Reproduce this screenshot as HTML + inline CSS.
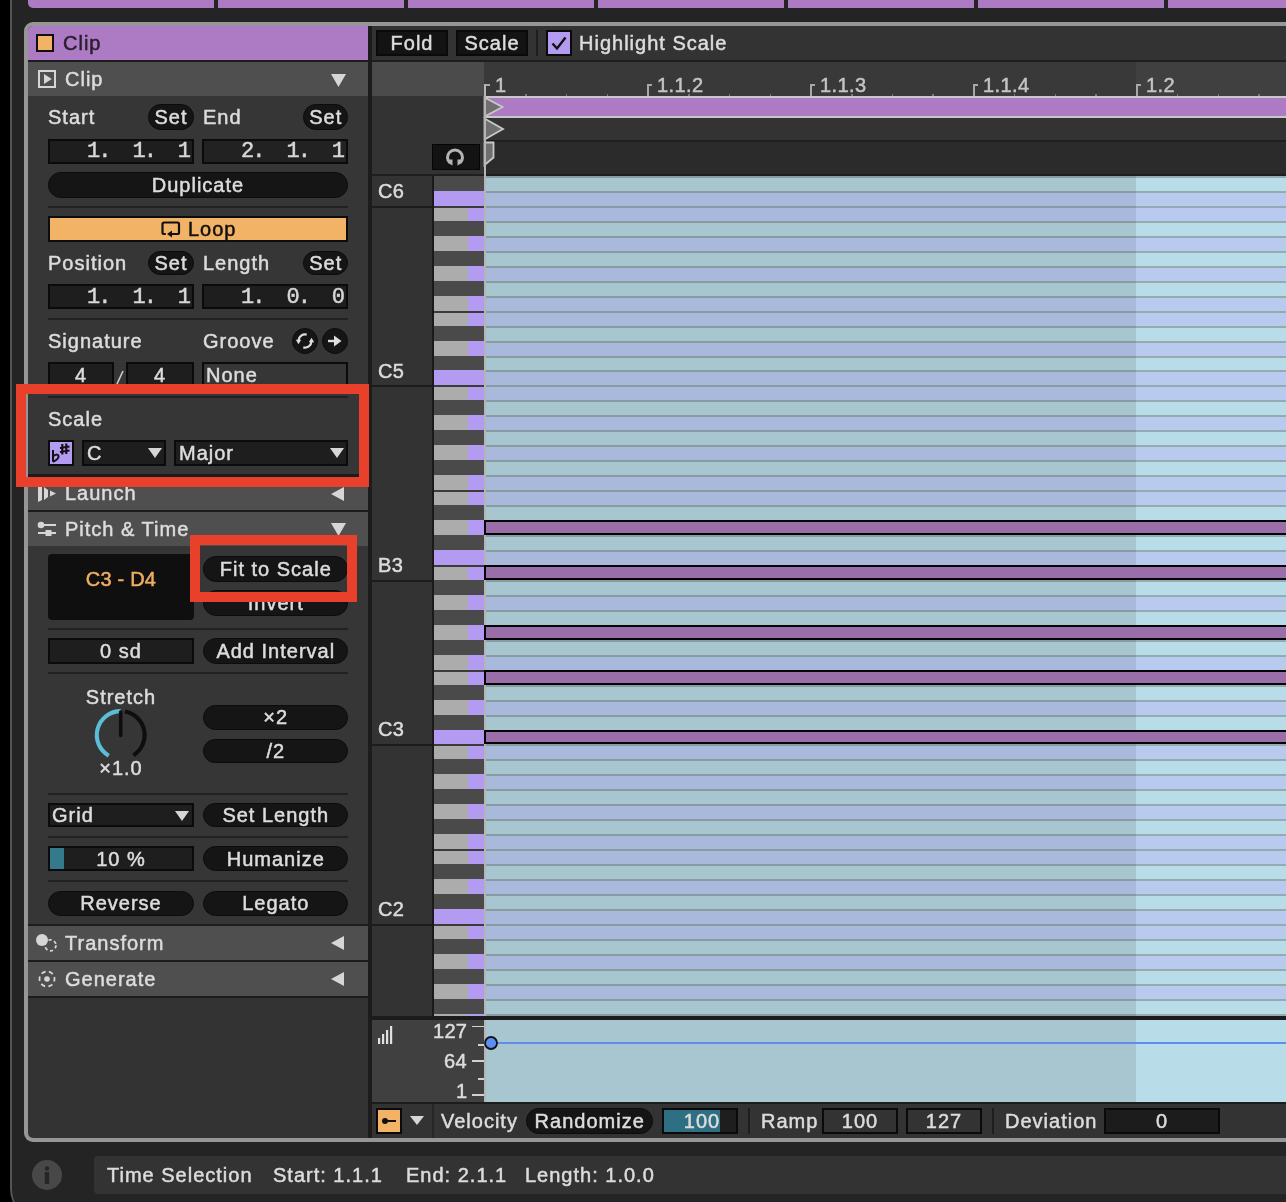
<!DOCTYPE html>
<html><head><meta charset="utf-8"><style>
html,body{margin:0;padding:0;}
body{width:1286px;height:1202px;position:relative;overflow:hidden;background:#000;font-family:'Liberation Sans', sans-serif;}
body>div{position:absolute;}
body>div[style*="font-family"]{will-change:transform;}
</style></head><body>
<div style="left:0px;top:0px;width:1286px;height:1202px;background:#000"></div>
<div style="left:10px;top:-40px;width:1310px;height:1259px;background:#242424;border-left:2px solid #555;border-bottom-left-radius:30px;box-sizing:border-box"></div>
<div style="left:28px;top:-5px;width:186px;height:13px;background:#ad7bc3;border-bottom-left-radius:5px;"></div>
<div style="left:218px;top:-5px;width:186px;height:13px;background:#ad7bc3;"></div>
<div style="left:408px;top:-5px;width:186px;height:13px;background:#ad7bc3;"></div>
<div style="left:598px;top:-5px;width:186px;height:13px;background:#ad7bc3;"></div>
<div style="left:788px;top:-5px;width:186px;height:13px;background:#ad7bc3;"></div>
<div style="left:978px;top:-5px;width:186px;height:13px;background:#ad7bc3;"></div>
<div style="left:1168px;top:-5px;width:132px;height:13px;background:#ad7bc3;"></div>
<div style="left:24px;top:22px;width:1276px;height:1120px;background:#969696;border-radius:9px 0 0 9px"></div>
<div style="left:28px;top:26px;width:1272px;height:1112px;background:#333;border-radius:5px 0 0 5px"></div>
<div style="left:28px;top:26px;width:340px;height:34px;background:#ad7bc3;border-top-left-radius:5px"></div>
<div style="left:36px;top:34px;width:18px;height:18px;background:#f3b366;border:2px solid #111;box-sizing:border-box"></div>
<div style="left:62.5px;top:31.9px;font-family:'Liberation Sans', sans-serif;font-size:20px;line-height:22.34px;color:#2a1d2e;letter-spacing:1.0px;white-space:nowrap;-webkit-text-stroke:0.5px #2a1d2e;">Clip</div>
<div style="left:28px;top:60px;width:340px;height:2px;background:#1c1c1c"></div>
<div style="left:28px;top:62px;width:340px;height:34px;background:#4f4f4f"></div>
<svg style="position:absolute;left:38px;top:70px;overflow:visible" width="18" height="18" viewBox="0 0 18 18"><rect x="1" y="1" width="16" height="16" fill="none" stroke="#d6d6d6" stroke-width="2"/><path d="M6 4 L13.8 9 L6 14 Z" fill="#d6d6d6"/></svg>
<div style="left:64.5px;top:68.4px;font-family:'Liberation Sans', sans-serif;font-size:20px;line-height:22.34px;color:#dcdcdc;letter-spacing:1.0px;white-space:nowrap;-webkit-text-stroke:0.5px #dcdcdc;">Clip</div>
<svg style="position:absolute;left:331px;top:74px;overflow:visible" width="15" height="13" viewBox="0 0 15 13"><path d="M0 0 L15 0 L7.5 13 Z" fill="#d6d6d6"/></svg>
<div style="left:28px;top:96px;width:340px;height:380px;background:#363636"></div>
<div style="left:47.5px;top:105.9px;font-family:'Liberation Sans', sans-serif;font-size:20px;line-height:22.34px;color:#dcdcdc;letter-spacing:1.0px;white-space:nowrap;-webkit-text-stroke:0.5px #dcdcdc;">Start</div>
<div style="left:148px;top:104px;width:46px;height:25.5px;background:#151515;border:1.5px solid #0c0c0c;border-radius:12.75px;box-sizing:border-box"></div>
<div style="left:148px;width:46px;text-align:center;top:105.53px;font-family:'Liberation Sans', sans-serif;font-size:20px;line-height:22.34px;color:#dcdcdc;letter-spacing:1.0px;white-space:nowrap;-webkit-text-stroke:0.5px #dcdcdc;">Set</div>
<div style="left:202.5px;top:105.9px;font-family:'Liberation Sans', sans-serif;font-size:20px;line-height:22.34px;color:#dcdcdc;letter-spacing:1.0px;white-space:nowrap;-webkit-text-stroke:0.5px #dcdcdc;">End</div>
<div style="left:302.5px;top:104px;width:45.5px;height:25.5px;background:#151515;border:1.5px solid #0c0c0c;border-radius:12.75px;box-sizing:border-box"></div>
<div style="left:302.5px;width:45.5px;text-align:center;top:105.53px;font-family:'Liberation Sans', sans-serif;font-size:20px;line-height:22.34px;color:#dcdcdc;letter-spacing:1.0px;white-space:nowrap;-webkit-text-stroke:0.5px #dcdcdc;">Set</div>
<div style="left:48px;top:138.5px;width:146px;height:25.0px;background:#1e1e1e;border:2px solid #0b0b0b;box-sizing:border-box"></div>
<div style="left:202px;top:138.5px;width:146px;height:25.0px;background:#222;border:2px solid #0b0b0b;box-sizing:border-box"></div>
<div style="right:1096.5px;top:139.69px;font-family:'Liberation Mono', monospace;font-size:22px;line-height:24.922px;color:#d8d8d8;letter-spacing:-1.85px;white-space:nowrap;-webkit-text-stroke:0.5px #d8d8d8;">1.&nbsp;&nbsp;1.&nbsp;&nbsp;1</div>
<div style="right:942.5px;top:139.69px;font-family:'Liberation Mono', monospace;font-size:22px;line-height:24.922px;color:#d8d8d8;letter-spacing:-1.85px;white-space:nowrap;-webkit-text-stroke:0.5px #d8d8d8;">2.&nbsp;&nbsp;1.&nbsp;&nbsp;1</div>
<div style="left:48px;top:172px;width:300px;height:25.5px;background:#151515;border:1.5px solid #0c0c0c;border-radius:12.75px;box-sizing:border-box"></div>
<div style="left:48px;width:300px;text-align:center;top:173.53px;font-family:'Liberation Sans', sans-serif;font-size:20px;line-height:22.34px;color:#dcdcdc;letter-spacing:1.0px;white-space:nowrap;-webkit-text-stroke:0.5px #dcdcdc;">Duplicate</div>
<div style="left:48px;top:206px;width:300px;height:2px;background:#222"></div>
<div style="left:48px;top:216px;width:300px;height:25.5px;background:#f3b366;border:2px solid #0c0c0c;box-sizing:border-box"></div>
<svg style="position:absolute;left:161px;top:221px;overflow:visible" width="20" height="17" viewBox="0 0 20 17"><path d="M4 13 L2.5 13 Q1.5 13 1.5 12 L1.5 3 Q1.5 1.5 3 1.5 L16.5 1.5 Q18 1.5 18 3 L18 11.5 Q18 13 16.5 13 L9 13" fill="none" stroke="#111" stroke-width="2.2" stroke-linecap="round"/><path d="M6 13 L11 9.5 L11 16.5 Z" fill="#111"/></svg>
<div style="left:188.0px;top:217.9px;font-family:'Liberation Sans', sans-serif;font-size:20px;line-height:22.34px;color:#111;letter-spacing:1.0px;white-space:nowrap;-webkit-text-stroke:0.5px #111;">Loop</div>
<div style="left:47.5px;top:251.9px;font-family:'Liberation Sans', sans-serif;font-size:20px;line-height:22.34px;color:#dcdcdc;letter-spacing:1.0px;white-space:nowrap;-webkit-text-stroke:0.5px #dcdcdc;">Position</div>
<div style="left:148px;top:250.8px;width:46px;height:24.5px;background:#151515;border:1.5px solid #0c0c0c;border-radius:12.25px;box-sizing:border-box"></div>
<div style="left:148px;width:46px;text-align:center;top:251.83px;font-family:'Liberation Sans', sans-serif;font-size:20px;line-height:22.34px;color:#dcdcdc;letter-spacing:1.0px;white-space:nowrap;-webkit-text-stroke:0.5px #dcdcdc;">Set</div>
<div style="left:202.5px;top:251.9px;font-family:'Liberation Sans', sans-serif;font-size:20px;line-height:22.34px;color:#dcdcdc;letter-spacing:1.0px;white-space:nowrap;-webkit-text-stroke:0.5px #dcdcdc;">Length</div>
<div style="left:302.5px;top:250.8px;width:45.5px;height:24.5px;background:#151515;border:1.5px solid #0c0c0c;border-radius:12.25px;box-sizing:border-box"></div>
<div style="left:302.5px;width:45.5px;text-align:center;top:251.83px;font-family:'Liberation Sans', sans-serif;font-size:20px;line-height:22.34px;color:#dcdcdc;letter-spacing:1.0px;white-space:nowrap;-webkit-text-stroke:0.5px #dcdcdc;">Set</div>
<div style="left:48px;top:284px;width:146px;height:25.3px;background:#1e1e1e;border:2px solid #0b0b0b;box-sizing:border-box"></div>
<div style="left:202px;top:284px;width:146px;height:25.3px;background:#1e1e1e;border:2px solid #0b0b0b;box-sizing:border-box"></div>
<div style="right:1096.5px;top:285.69px;font-family:'Liberation Mono', monospace;font-size:22px;line-height:24.922px;color:#d8d8d8;letter-spacing:-1.85px;white-space:nowrap;-webkit-text-stroke:0.5px #d8d8d8;">1.&nbsp;&nbsp;1.&nbsp;&nbsp;1</div>
<div style="right:942.5px;top:285.69px;font-family:'Liberation Mono', monospace;font-size:22px;line-height:24.922px;color:#d8d8d8;letter-spacing:-1.85px;white-space:nowrap;-webkit-text-stroke:0.5px #d8d8d8;">1.&nbsp;&nbsp;0.&nbsp;&nbsp;0</div>
<div style="left:48px;top:318px;width:300px;height:2px;background:#222"></div>
<div style="left:47.5px;top:329.9px;font-family:'Liberation Sans', sans-serif;font-size:20px;line-height:22.34px;color:#dcdcdc;letter-spacing:1.0px;white-space:nowrap;-webkit-text-stroke:0.5px #dcdcdc;">Signature</div>
<div style="left:202.5px;top:329.9px;font-family:'Liberation Sans', sans-serif;font-size:20px;line-height:22.34px;color:#dcdcdc;letter-spacing:1.0px;white-space:nowrap;-webkit-text-stroke:0.5px #dcdcdc;">Groove</div>
<div style="left:292px;top:328px;width:26px;height:26px;background:#151515;border:1.5px solid #0c0c0c;border-radius:13px;box-sizing:border-box"></div>
<div style="left:322px;top:328px;width:26px;height:26px;background:#151515;border:1.5px solid #0c0c0c;border-radius:13px;box-sizing:border-box"></div>
<svg style="position:absolute;left:292px;top:328px;overflow:visible" width="26" height="26" viewBox="0 0 26 26"><path d="M14.7 6.7 A6.5 6.5 0 0 0 6.5 12.5" fill="none" stroke="#ddd" stroke-width="2.3"/><path d="M3.8 11.8 L9.2 11.8 L6.5 16.3 Z" fill="#ddd"/><path d="M11.3 19.3 A6.5 6.5 0 0 0 19.5 13.5" fill="none" stroke="#ddd" stroke-width="2.3"/><path d="M16.8 14.2 L22.2 14.2 L19.5 9.7 Z" fill="#ddd"/></svg>
<svg style="position:absolute;left:322px;top:328px;overflow:visible" width="26" height="26" viewBox="0 0 26 26"><path d="M6 13 L13 13" stroke="#ddd" stroke-width="2.4"/><path d="M12 7.5 L19.5 13 L12 18.5 Z" fill="#ddd"/></svg>
<div style="left:48px;top:362.3px;width:66px;height:25.2px;background:#1e1e1e;border:2px solid #0b0b0b;box-sizing:border-box"></div>
<div style="left:126px;top:362.3px;width:68px;height:25.2px;background:#1e1e1e;border:2px solid #0b0b0b;box-sizing:border-box"></div>
<div style="left:48px;width:66px;text-align:center;top:363.9px;font-family:'Liberation Sans', sans-serif;font-size:20px;line-height:22.34px;color:#dcdcdc;letter-spacing:1.0px;white-space:nowrap;-webkit-text-stroke:0.5px #dcdcdc;">4</div>
<div style="left:126px;width:68px;text-align:center;top:363.9px;font-family:'Liberation Sans', sans-serif;font-size:20px;line-height:22.34px;color:#dcdcdc;letter-spacing:1.0px;white-space:nowrap;-webkit-text-stroke:0.5px #dcdcdc;">4</div>
<svg style="position:absolute;left:114px;top:362px;overflow:visible" width="12" height="24" viewBox="0 0 12 24"><path d="M3 22 L9 9" stroke="#cfcfcf" stroke-width="1.6"/></svg>
<div style="left:202px;top:362.3px;width:146px;height:25.2px;background:#363636;border:2px solid #0b0b0b;box-sizing:border-box"></div>
<div style="left:205.5px;top:363.9px;font-family:'Liberation Sans', sans-serif;font-size:20px;line-height:22.34px;color:#dcdcdc;letter-spacing:1.0px;white-space:nowrap;-webkit-text-stroke:0.5px #dcdcdc;">None</div>
<div style="left:48px;top:396px;width:300px;height:2px;background:#222"></div>
<div style="left:47.5px;top:408.4px;font-family:'Liberation Sans', sans-serif;font-size:20px;line-height:22.34px;color:#dcdcdc;letter-spacing:1.0px;white-space:nowrap;-webkit-text-stroke:0.5px #dcdcdc;">Scale</div>
<div style="left:48px;top:440px;width:26px;height:26px;background:#b39bf2;border:2px solid #0c0c0c;box-sizing:border-box"></div>
<svg style="position:absolute;left:48px;top:440px;overflow:visible" width="26" height="26" viewBox="0 0 26 26"><path d="M5 10 L5 21.8" stroke="#111" stroke-width="2"/><path d="M5 16.2 Q10.5 13 10.6 16.3 Q10.5 19.5 5 21.8" fill="none" stroke="#111" stroke-width="2"/><path d="M14.3 4 L14.3 14.5 M18.3 3.5 L18.3 14 M12 8 L21.5 6.5 M12 12 L21.5 10.5" stroke="#111" stroke-width="2.1"/></svg>
<div style="left:82px;top:440px;width:84px;height:26px;background:#1e1e1e;border:2px solid #0b0b0b;box-sizing:border-box"></div>
<div style="left:86.5px;top:441.9px;font-family:'Liberation Sans', sans-serif;font-size:20px;line-height:22.34px;color:#dcdcdc;letter-spacing:1.0px;white-space:nowrap;-webkit-text-stroke:0.5px #dcdcdc;">C</div>
<svg style="position:absolute;left:148px;top:448px;overflow:visible" width="14" height="10" viewBox="0 0 14 10"><path d="M0 0 L14 0 L7 10 Z" fill="#d6d6d6"/></svg>
<div style="left:174.4px;top:440px;width:173.6px;height:26px;background:#1e1e1e;border:2px solid #0b0b0b;box-sizing:border-box"></div>
<div style="left:178.5px;top:441.9px;font-family:'Liberation Sans', sans-serif;font-size:20px;line-height:22.34px;color:#dcdcdc;letter-spacing:1.0px;white-space:nowrap;-webkit-text-stroke:0.5px #dcdcdc;">Major</div>
<svg style="position:absolute;left:330px;top:448px;overflow:visible" width="14" height="10" viewBox="0 0 14 10"><path d="M0 0 L14 0 L7 10 Z" fill="#d6d6d6"/></svg>
<div style="left:28px;top:474px;width:340px;height:3px;background:#1c1c1c"></div>
<div style="left:28px;top:477px;width:340px;height:33px;background:#4f4f4f"></div>
<svg style="position:absolute;left:37px;top:486px;overflow:visible" width="20" height="17" viewBox="0 0 20 17"><path d="M1 1 L5 1 L5 14 L1 16 Z" fill="#d6d6d6"/><path d="M7 1 L11 4 L11 11 L7 14 Z" fill="#d6d6d6"/><path d="M13 4.5 L19 7.5 L13 10.5 Z" fill="#d6d6d6"/></svg>
<div style="left:64.5px;top:481.9px;font-family:'Liberation Sans', sans-serif;font-size:20px;line-height:22.34px;color:#dcdcdc;letter-spacing:1.0px;white-space:nowrap;-webkit-text-stroke:0.5px #dcdcdc;">Launch</div>
<svg style="position:absolute;left:331px;top:487px;overflow:visible" width="13" height="14" viewBox="0 0 13 14"><path d="M13 0 L13 14 L0 7 Z" fill="#d6d6d6"/></svg>
<div style="left:28px;top:510px;width:340px;height:2px;background:#1c1c1c"></div>
<div style="left:28px;top:512px;width:340px;height:34px;background:#4f4f4f"></div>
<svg style="position:absolute;left:37px;top:519px;overflow:visible" width="20" height="20" viewBox="0 0 20 20"><circle cx="4" cy="6" r="3.3" fill="#d6d6d6"/><path d="M4 6 L19 6" stroke="#d6d6d6" stroke-width="2"/><path d="M1 14 L19 14" stroke="#d6d6d6" stroke-width="2"/><rect x="8.5" y="11" width="6" height="6" fill="#d6d6d6"/></svg>
<div style="left:64.5px;top:517.9px;font-family:'Liberation Sans', sans-serif;font-size:20px;line-height:22.34px;color:#dcdcdc;letter-spacing:1.0px;white-space:nowrap;-webkit-text-stroke:0.5px #dcdcdc;">Pitch &amp; Time</div>
<svg style="position:absolute;left:331px;top:523px;overflow:visible" width="15" height="13" viewBox="0 0 15 13"><path d="M0 0 L15 0 L7.5 13 Z" fill="#d6d6d6"/></svg>
<div style="left:28px;top:546px;width:340px;height:378px;background:#363636"></div>
<div style="left:48px;top:554px;width:146px;height:66px;background:#0f0f0f;border-radius:4px"></div>
<div style="left:48px;width:146px;text-align:center;top:568.4px;font-family:'Liberation Sans', sans-serif;font-size:20px;line-height:22.34px;color:#f0ad5f;letter-spacing:0.2px;white-space:nowrap;-webkit-text-stroke:0.5px #f0ad5f;">C3 - D4</div>
<div style="left:202.5px;top:556px;width:145.5px;height:25.5px;background:#151515;border:1.5px solid #0c0c0c;border-radius:12.75px;box-sizing:border-box"></div>
<div style="left:202.5px;width:145.5px;text-align:center;top:557.53px;font-family:'Liberation Sans', sans-serif;font-size:20px;line-height:22.34px;color:#dcdcdc;letter-spacing:1.0px;white-space:nowrap;-webkit-text-stroke:0.5px #dcdcdc;">Fit to Scale</div>
<div style="left:202.5px;top:590px;width:145.5px;height:26px;background:#151515;border:1.5px solid #0c0c0c;border-radius:13.0px;box-sizing:border-box"></div>
<div style="left:202.5px;width:145.5px;text-align:center;top:591.78px;font-family:'Liberation Sans', sans-serif;font-size:20px;line-height:22.34px;color:#dcdcdc;letter-spacing:1.0px;white-space:nowrap;-webkit-text-stroke:0.5px #dcdcdc;">Invert</div>
<div style="left:48px;top:628px;width:300px;height:2px;background:#222"></div>
<div style="left:48px;top:638px;width:146px;height:26px;background:#1e1e1e;border:2px solid #0b0b0b;box-sizing:border-box"></div>
<div style="left:48px;width:146px;text-align:center;top:639.9px;font-family:'Liberation Sans', sans-serif;font-size:20px;line-height:22.34px;color:#dcdcdc;letter-spacing:1.0px;white-space:nowrap;-webkit-text-stroke:0.5px #dcdcdc;">0 sd</div>
<div style="left:202.5px;top:638px;width:145.5px;height:26px;background:#151515;border:1.5px solid #0c0c0c;border-radius:13.0px;box-sizing:border-box"></div>
<div style="left:202.5px;width:145.5px;text-align:center;top:639.78px;font-family:'Liberation Sans', sans-serif;font-size:20px;line-height:22.34px;color:#dcdcdc;letter-spacing:1.0px;white-space:nowrap;-webkit-text-stroke:0.5px #dcdcdc;">Add Interval</div>
<div style="left:48px;top:672px;width:300px;height:2px;background:#222"></div>
<div style="left:48px;width:146px;text-align:center;top:685.9px;font-family:'Liberation Sans', sans-serif;font-size:20px;line-height:22.34px;color:#dcdcdc;letter-spacing:1.0px;white-space:nowrap;-webkit-text-stroke:0.5px #dcdcdc;">Stretch</div>
<svg style="position:absolute;left:0px;top:0px;overflow:visible" width="400" height="800" viewBox="0 0 400 800"><path d="M108.75 755.70 A23.9 23.9 0 0 1 120.70 711.10" fill="none" stroke="#5bbdd6" stroke-width="4.1"/><path d="M124.85 711.46 A23.9 23.9 0 0 1 133.37 755.27" fill="none" stroke="#0e0e0e" stroke-width="4.1"/><path d="M120.7 712 L120.7 735.5" stroke="#0e0e0e" stroke-width="3.6" stroke-linecap="round"/></svg>
<div style="left:48px;width:146px;text-align:center;top:756.9px;font-family:'Liberation Sans', sans-serif;font-size:20px;line-height:22.34px;color:#dcdcdc;letter-spacing:1.0px;white-space:nowrap;-webkit-text-stroke:0.5px #dcdcdc;">×1.0</div>
<div style="left:202.5px;top:705px;width:145.5px;height:24.5px;background:#151515;border:1.5px solid #0c0c0c;border-radius:12.25px;box-sizing:border-box"></div>
<div style="left:202.5px;width:145.5px;text-align:center;top:706.03px;font-family:'Liberation Sans', sans-serif;font-size:20px;line-height:22.34px;color:#dcdcdc;letter-spacing:1.0px;white-space:nowrap;-webkit-text-stroke:0.5px #dcdcdc;">×2</div>
<div style="left:202.5px;top:738.6px;width:145.5px;height:24.8px;background:#151515;border:1.5px solid #0c0c0c;border-radius:12.399999999999977px;box-sizing:border-box"></div>
<div style="left:202.5px;width:145.5px;text-align:center;top:739.78px;font-family:'Liberation Sans', sans-serif;font-size:20px;line-height:22.34px;color:#dcdcdc;letter-spacing:1.0px;white-space:nowrap;-webkit-text-stroke:0.5px #dcdcdc;">/2</div>
<div style="left:48px;top:792.5px;width:300px;height:2.0px;background:#222"></div>
<div style="left:48px;top:802.6px;width:146px;height:24.7px;background:#1e1e1e;border:2px solid #0b0b0b;box-sizing:border-box"></div>
<div style="left:51.5px;top:803.9px;font-family:'Liberation Sans', sans-serif;font-size:20px;line-height:22.34px;color:#dcdcdc;letter-spacing:1.0px;white-space:nowrap;-webkit-text-stroke:0.5px #dcdcdc;">Grid</div>
<svg style="position:absolute;left:175px;top:811px;overflow:visible" width="14" height="10" viewBox="0 0 14 10"><path d="M0 0 L14 0 L7 10 Z" fill="#d6d6d6"/></svg>
<div style="left:202.5px;top:802.6px;width:145.5px;height:24.7px;background:#151515;border:1.5px solid #0c0c0c;border-radius:12.349999999999966px;box-sizing:border-box"></div>
<div style="left:202.5px;width:145.5px;text-align:center;top:803.73px;font-family:'Liberation Sans', sans-serif;font-size:20px;line-height:22.34px;color:#dcdcdc;letter-spacing:1.0px;white-space:nowrap;-webkit-text-stroke:0.5px #dcdcdc;">Set Length</div>
<div style="left:48px;top:836px;width:300px;height:2px;background:#222"></div>
<div style="left:48px;top:846.4px;width:146px;height:25.0px;background:#1e1e1e;border:2px solid #0b0b0b;box-sizing:border-box"></div>
<div style="left:50px;top:848.4px;width:14px;height:21.0px;background:#357a8c"></div>
<div style="left:48px;width:146px;text-align:center;top:847.9px;font-family:'Liberation Sans', sans-serif;font-size:20px;line-height:22.34px;color:#dcdcdc;letter-spacing:1.0px;white-space:nowrap;-webkit-text-stroke:0.5px #dcdcdc;">10 %</div>
<div style="left:202.5px;top:846.4px;width:145.5px;height:25.0px;background:#151515;border:1.5px solid #0c0c0c;border-radius:12.5px;box-sizing:border-box"></div>
<div style="left:202.5px;width:145.5px;text-align:center;top:847.68px;font-family:'Liberation Sans', sans-serif;font-size:20px;line-height:22.34px;color:#dcdcdc;letter-spacing:1.0px;white-space:nowrap;-webkit-text-stroke:0.5px #dcdcdc;">Humanize</div>
<div style="left:48px;top:880px;width:300px;height:2px;background:#222"></div>
<div style="left:48px;top:890.5px;width:146px;height:25.5px;background:#151515;border:1.5px solid #0c0c0c;border-radius:12.75px;box-sizing:border-box"></div>
<div style="left:48px;width:146px;text-align:center;top:892.03px;font-family:'Liberation Sans', sans-serif;font-size:20px;line-height:22.34px;color:#dcdcdc;letter-spacing:1.0px;white-space:nowrap;-webkit-text-stroke:0.5px #dcdcdc;">Reverse</div>
<div style="left:202.5px;top:890.5px;width:145.5px;height:25.5px;background:#151515;border:1.5px solid #0c0c0c;border-radius:12.75px;box-sizing:border-box"></div>
<div style="left:202.5px;width:145.5px;text-align:center;top:892.03px;font-family:'Liberation Sans', sans-serif;font-size:20px;line-height:22.34px;color:#dcdcdc;letter-spacing:1.0px;white-space:nowrap;-webkit-text-stroke:0.5px #dcdcdc;">Legato</div>
<div style="left:28px;top:924px;width:340px;height:2px;background:#1c1c1c"></div>
<div style="left:28px;top:926px;width:340px;height:34px;background:#4f4f4f"></div>
<svg style="position:absolute;left:34px;top:930px;overflow:visible" width="24" height="24" viewBox="0 0 24 24"><circle cx="8" cy="10" r="6" fill="#d6d6d6"/><circle cx="16.5" cy="15.3" r="5.5" fill="none" stroke="#d6d6d6" stroke-width="1.8" stroke-dasharray="3.2 2.6"/></svg>
<div style="left:64.5px;top:931.9px;font-family:'Liberation Sans', sans-serif;font-size:20px;line-height:22.34px;color:#dcdcdc;letter-spacing:1.0px;white-space:nowrap;-webkit-text-stroke:0.5px #dcdcdc;">Transform</div>
<svg style="position:absolute;left:331px;top:936px;overflow:visible" width="13" height="14" viewBox="0 0 13 14"><path d="M13 0 L13 14 L0 7 Z" fill="#d6d6d6"/></svg>
<div style="left:28px;top:960px;width:340px;height:2px;background:#1c1c1c"></div>
<div style="left:28px;top:962px;width:340px;height:34px;background:#4f4f4f"></div>
<svg style="position:absolute;left:37px;top:969px;overflow:visible" width="20" height="20" viewBox="0 0 20 20"><circle cx="10" cy="10" r="7.5" fill="none" stroke="#d6d6d6" stroke-width="1.8" stroke-dasharray="4.5 3.3" stroke-dashoffset="2"/><circle cx="10" cy="10" r="2.8" fill="#d6d6d6"/></svg>
<div style="left:64.5px;top:967.9px;font-family:'Liberation Sans', sans-serif;font-size:20px;line-height:22.34px;color:#dcdcdc;letter-spacing:1.0px;white-space:nowrap;-webkit-text-stroke:0.5px #dcdcdc;">Generate</div>
<svg style="position:absolute;left:331px;top:972px;overflow:visible" width="13" height="14" viewBox="0 0 13 14"><path d="M13 0 L13 14 L0 7 Z" fill="#d6d6d6"/></svg>
<div style="left:28px;top:996px;width:340px;height:2px;background:#1c1c1c"></div>
<div style="left:368px;top:26px;width:4px;height:1112px;background:#1c1c1c"></div>
<div style="left:372px;top:26px;width:928px;height:34px;background:#333"></div>
<div style="left:376px;top:30px;width:72px;height:26px;background:#131313;border:2px solid #0a0a0a;box-sizing:border-box"></div>
<div style="left:376px;width:72px;text-align:center;top:31.9px;font-family:'Liberation Sans', sans-serif;font-size:20px;line-height:22.34px;color:#dcdcdc;letter-spacing:1.0px;white-space:nowrap;-webkit-text-stroke:0.5px #dcdcdc;">Fold</div>
<div style="left:456px;top:30px;width:72px;height:26px;background:#131313;border:2px solid #0a0a0a;box-sizing:border-box"></div>
<div style="left:456px;width:72px;text-align:center;top:31.9px;font-family:'Liberation Sans', sans-serif;font-size:20px;line-height:22.34px;color:#dcdcdc;letter-spacing:1.0px;white-space:nowrap;-webkit-text-stroke:0.5px #dcdcdc;">Scale</div>
<div style="left:536px;top:30px;width:2px;height:26px;background:#1e1e1e"></div>
<div style="left:546px;top:30px;width:26px;height:26px;background:#b39bf2;border:2px solid #0a0a0a;box-sizing:border-box"></div>
<svg style="position:absolute;left:546px;top:30px;overflow:visible" width="26" height="26" viewBox="0 0 26 26"><path d="M6.5 13.5 L11 18.5 L19.5 7.5" fill="none" stroke="#111" stroke-width="2.4"/></svg>
<div style="left:578.5px;top:31.9px;font-family:'Liberation Sans', sans-serif;font-size:20px;line-height:22.34px;color:#dcdcdc;letter-spacing:1.0px;white-space:nowrap;-webkit-text-stroke:0.5px #dcdcdc;">Highlight Scale</div>
<div style="left:372px;top:60px;width:928px;height:2px;background:#1e1e1e"></div>
<div style="left:372px;top:62px;width:112px;height:34px;background:#4b4b4b"></div>
<div style="left:484px;top:62px;width:652px;height:34px;background:#393939"></div>
<div style="left:1136px;top:62px;width:164px;height:34px;background:#404040"></div>
<div style="left:484.5px;top:84px;width:1.5px;height:12px;background:#a8a8a8"></div>
<div style="left:484.5px;top:84px;width:5.0px;height:1.5px;background:#a8a8a8"></div>
<div style="left:494.5px;top:73.9px;font-family:'Liberation Sans', sans-serif;font-size:20px;line-height:22.34px;color:#c4c4c4;letter-spacing:0.4px;white-space:nowrap;-webkit-text-stroke:0.5px #c4c4c4;">1</div>
<div style="left:647.4px;top:84px;width:1.5px;height:12px;background:#a8a8a8"></div>
<div style="left:647.4px;top:84px;width:5.0px;height:1.5px;background:#a8a8a8"></div>
<div style="left:657.4px;top:73.9px;font-family:'Liberation Sans', sans-serif;font-size:20px;line-height:22.34px;color:#c4c4c4;letter-spacing:0.4px;white-space:nowrap;-webkit-text-stroke:0.5px #c4c4c4;">1.1.2</div>
<div style="left:810.3px;top:84px;width:1.5px;height:12px;background:#a8a8a8"></div>
<div style="left:810.3px;top:84px;width:5.0px;height:1.5px;background:#a8a8a8"></div>
<div style="left:820.3px;top:73.9px;font-family:'Liberation Sans', sans-serif;font-size:20px;line-height:22.34px;color:#c4c4c4;letter-spacing:0.4px;white-space:nowrap;-webkit-text-stroke:0.5px #c4c4c4;">1.1.3</div>
<div style="left:973.2px;top:84px;width:1.5px;height:12px;background:#a8a8a8"></div>
<div style="left:973.2px;top:84px;width:5.0px;height:1.5px;background:#a8a8a8"></div>
<div style="left:983.2px;top:73.9px;font-family:'Liberation Sans', sans-serif;font-size:20px;line-height:22.34px;color:#c4c4c4;letter-spacing:0.4px;white-space:nowrap;-webkit-text-stroke:0.5px #c4c4c4;">1.1.4</div>
<div style="left:1136.1px;top:84px;width:1.5px;height:12px;background:#a8a8a8"></div>
<div style="left:1136.1px;top:84px;width:5.0px;height:1.5px;background:#a8a8a8"></div>
<div style="left:1146.1px;top:73.9px;font-family:'Liberation Sans', sans-serif;font-size:20px;line-height:22.34px;color:#c4c4c4;letter-spacing:0.4px;white-space:nowrap;-webkit-text-stroke:0.5px #c4c4c4;">1.2</div>
<div style="left:525.22px;top:93.5px;width:1.5px;height:2.5px;background:#7c7c7c"></div>
<div style="left:565.94px;top:93.5px;width:1.5px;height:2.5px;background:#7c7c7c"></div>
<div style="left:606.66px;top:93.5px;width:1.5px;height:2.5px;background:#7c7c7c"></div>
<div style="left:688.12px;top:93.5px;width:1.5px;height:2.5px;background:#7c7c7c"></div>
<div style="left:728.8399999999999px;top:93.5px;width:1.5px;height:2.5px;background:#7c7c7c"></div>
<div style="left:769.56px;top:93.5px;width:1.5px;height:2.5px;background:#7c7c7c"></div>
<div style="left:851.02px;top:93.5px;width:1.5px;height:2.5px;background:#7c7c7c"></div>
<div style="left:891.74px;top:93.5px;width:1.5px;height:2.5px;background:#7c7c7c"></div>
<div style="left:932.4599999999999px;top:93.5px;width:1.5px;height:2.5px;background:#7c7c7c"></div>
<div style="left:1013.9200000000001px;top:93.5px;width:1.5px;height:2.5px;background:#7c7c7c"></div>
<div style="left:1054.64px;top:93.5px;width:1.5px;height:2.5px;background:#7c7c7c"></div>
<div style="left:1095.3600000000001px;top:93.5px;width:1.5px;height:2.5px;background:#7c7c7c"></div>
<div style="left:1176.82px;top:93.5px;width:1.5px;height:2.5px;background:#7c7c7c"></div>
<div style="left:1217.54px;top:93.5px;width:1.5px;height:2.5px;background:#7c7c7c"></div>
<div style="left:1258.26px;top:93.5px;width:1.5px;height:2.5px;background:#7c7c7c"></div>
<div style="left:372px;top:96px;width:112px;height:80px;background:#333"></div>
<div style="left:484px;top:96px;width:816px;height:22px;background:#c8c8c8"></div>
<div style="left:486px;top:98px;width:814px;height:18px;background:#ad7bc3"></div>
<div style="left:484px;top:118px;width:816px;height:22px;background:#333"></div>
<div style="left:484px;top:140px;width:816px;height:2px;background:#1e1e1e"></div>
<div style="left:484px;top:142px;width:816px;height:32px;background:#2b2b2b"></div>
<div style="left:372px;top:174px;width:928px;height:2px;background:#1e1e1e"></div>
<svg style="position:absolute;left:483px;top:96px;overflow:visible" width="24" height="80" viewBox="0 0 24 80"><path d="M1.5 1.5 L19.5 11 L1.5 20.5 Z" fill="#6f6f6f" stroke="#c8c8c8" stroke-width="1.8" stroke-linejoin="miter"/><path d="M1.5 22.5 L20 33 L1.5 43.5 Z" fill="#6f6f6f" stroke="#c8c8c8" stroke-width="1.8"/><path d="M1.5 46.5 L10.5 46.5 L10.5 61.5 L1.5 69 Z" fill="#6f6f6f" stroke="#c8c8c8" stroke-width="1.8"/></svg>
<div style="left:432px;top:144px;width:48px;height:26px;background:#131313;border:1.5px solid #050505;box-sizing:border-box"></div>
<svg style="position:absolute;left:444px;top:146px;overflow:visible" width="22" height="22" viewBox="0 0 22 22"><path d="M6 17 A7.5 7.5 0 1 1 16 17" fill="none" stroke="#b4b4b4" stroke-width="3"/><path d="M4 13.5 L8.5 13.5 L8.5 19.5 Q6 19 4 16 Z" fill="#b4b4b4"/><path d="M18 13.5 L13.5 13.5 L13.5 19.5 Q16 19 18 16 Z" fill="#b4b4b4"/></svg>
<div style="left:372px;top:176px;width:60px;height:840px;background:#333"></div>
<div style="left:432px;top:176px;width:2px;height:840px;background:#1a1a1a"></div>
<div style="left:434px;top:176px;width:50px;height:15px;background:#4a4a4a"></div>
<div style="left:486px;top:176px;width:650px;height:15px;background:#a8c6d0"></div>
<div style="left:1136px;top:176px;width:164px;height:15px;background:#b8dde8"></div>
<div style="left:486px;top:176px;width:650px;height:2px;background:#869ba2"></div>
<div style="left:1136px;top:176px;width:164px;height:2px;background:#94abb2"></div>
<div style="left:434px;top:191px;width:50px;height:15px;background:#b39bf2"></div>
<div style="left:486px;top:191px;width:650px;height:15px;background:#a9b9dc"></div>
<div style="left:1136px;top:191px;width:164px;height:15px;background:#b8cbee"></div>
<div style="left:486px;top:191px;width:650px;height:2px;background:#869ba2"></div>
<div style="left:1136px;top:191px;width:164px;height:2px;background:#94abb2"></div>
<div style="left:434px;top:206px;width:34px;height:15px;background:#acacac"></div>
<div style="left:468px;top:206px;width:16px;height:15px;background:#b39bf2"></div>
<div style="left:434px;top:206px;width:50px;height:2px;background:#3b3b39"></div>
<div style="left:486px;top:206px;width:650px;height:15px;background:#a9b9dc"></div>
<div style="left:1136px;top:206px;width:164px;height:15px;background:#b8cbee"></div>
<div style="left:486px;top:206px;width:650px;height:2px;background:#869ba2"></div>
<div style="left:1136px;top:206px;width:164px;height:2px;background:#94abb2"></div>
<div style="left:434px;top:221px;width:50px;height:15px;background:#4a4a4a"></div>
<div style="left:486px;top:221px;width:650px;height:15px;background:#a8c6d0"></div>
<div style="left:1136px;top:221px;width:164px;height:15px;background:#b8dde8"></div>
<div style="left:486px;top:221px;width:650px;height:2px;background:#869ba2"></div>
<div style="left:1136px;top:221px;width:164px;height:2px;background:#94abb2"></div>
<div style="left:434px;top:236px;width:34px;height:15px;background:#acacac"></div>
<div style="left:468px;top:236px;width:16px;height:15px;background:#b39bf2"></div>
<div style="left:486px;top:236px;width:650px;height:15px;background:#a9b9dc"></div>
<div style="left:1136px;top:236px;width:164px;height:15px;background:#b8cbee"></div>
<div style="left:486px;top:236px;width:650px;height:2px;background:#869ba2"></div>
<div style="left:1136px;top:236px;width:164px;height:2px;background:#94abb2"></div>
<div style="left:434px;top:251px;width:50px;height:15px;background:#4a4a4a"></div>
<div style="left:486px;top:251px;width:650px;height:15px;background:#a8c6d0"></div>
<div style="left:1136px;top:251px;width:164px;height:15px;background:#b8dde8"></div>
<div style="left:486px;top:251px;width:650px;height:2px;background:#869ba2"></div>
<div style="left:1136px;top:251px;width:164px;height:2px;background:#94abb2"></div>
<div style="left:434px;top:266px;width:34px;height:15px;background:#acacac"></div>
<div style="left:468px;top:266px;width:16px;height:15px;background:#b39bf2"></div>
<div style="left:486px;top:266px;width:650px;height:15px;background:#a9b9dc"></div>
<div style="left:1136px;top:266px;width:164px;height:15px;background:#b8cbee"></div>
<div style="left:486px;top:266px;width:650px;height:2px;background:#869ba2"></div>
<div style="left:1136px;top:266px;width:164px;height:2px;background:#94abb2"></div>
<div style="left:434px;top:281px;width:50px;height:15px;background:#4a4a4a"></div>
<div style="left:486px;top:281px;width:650px;height:15px;background:#a8c6d0"></div>
<div style="left:1136px;top:281px;width:164px;height:15px;background:#b8dde8"></div>
<div style="left:486px;top:281px;width:650px;height:2px;background:#869ba2"></div>
<div style="left:1136px;top:281px;width:164px;height:2px;background:#94abb2"></div>
<div style="left:434px;top:296px;width:34px;height:15px;background:#acacac"></div>
<div style="left:468px;top:296px;width:16px;height:15px;background:#b39bf2"></div>
<div style="left:486px;top:296px;width:650px;height:15px;background:#a9b9dc"></div>
<div style="left:1136px;top:296px;width:164px;height:15px;background:#b8cbee"></div>
<div style="left:486px;top:296px;width:650px;height:2px;background:#869ba2"></div>
<div style="left:1136px;top:296px;width:164px;height:2px;background:#94abb2"></div>
<div style="left:434px;top:311px;width:34px;height:15px;background:#acacac"></div>
<div style="left:468px;top:311px;width:16px;height:15px;background:#b39bf2"></div>
<div style="left:434px;top:311px;width:50px;height:2px;background:#3b3b39"></div>
<div style="left:486px;top:311px;width:650px;height:15px;background:#a9b9dc"></div>
<div style="left:1136px;top:311px;width:164px;height:15px;background:#b8cbee"></div>
<div style="left:486px;top:311px;width:650px;height:2px;background:#869ba2"></div>
<div style="left:1136px;top:311px;width:164px;height:2px;background:#94abb2"></div>
<div style="left:434px;top:326px;width:50px;height:15px;background:#4a4a4a"></div>
<div style="left:486px;top:326px;width:650px;height:15px;background:#a8c6d0"></div>
<div style="left:1136px;top:326px;width:164px;height:15px;background:#b8dde8"></div>
<div style="left:486px;top:326px;width:650px;height:2px;background:#869ba2"></div>
<div style="left:1136px;top:326px;width:164px;height:2px;background:#94abb2"></div>
<div style="left:434px;top:341px;width:34px;height:15px;background:#acacac"></div>
<div style="left:468px;top:341px;width:16px;height:15px;background:#b39bf2"></div>
<div style="left:486px;top:341px;width:650px;height:15px;background:#a9b9dc"></div>
<div style="left:1136px;top:341px;width:164px;height:15px;background:#b8cbee"></div>
<div style="left:486px;top:341px;width:650px;height:2px;background:#869ba2"></div>
<div style="left:1136px;top:341px;width:164px;height:2px;background:#94abb2"></div>
<div style="left:434px;top:356px;width:50px;height:14px;background:#4a4a4a"></div>
<div style="left:486px;top:356px;width:650px;height:14px;background:#a8c6d0"></div>
<div style="left:1136px;top:356px;width:164px;height:14px;background:#b8dde8"></div>
<div style="left:486px;top:356px;width:650px;height:2px;background:#869ba2"></div>
<div style="left:1136px;top:356px;width:164px;height:2px;background:#94abb2"></div>
<div style="left:434px;top:370px;width:50px;height:15px;background:#b39bf2"></div>
<div style="left:486px;top:370px;width:650px;height:15px;background:#a9b9dc"></div>
<div style="left:1136px;top:370px;width:164px;height:15px;background:#b8cbee"></div>
<div style="left:486px;top:370px;width:650px;height:2px;background:#869ba2"></div>
<div style="left:1136px;top:370px;width:164px;height:2px;background:#94abb2"></div>
<div style="left:434px;top:385px;width:34px;height:15px;background:#acacac"></div>
<div style="left:468px;top:385px;width:16px;height:15px;background:#b39bf2"></div>
<div style="left:434px;top:385px;width:50px;height:2px;background:#3b3b39"></div>
<div style="left:486px;top:385px;width:650px;height:15px;background:#a9b9dc"></div>
<div style="left:1136px;top:385px;width:164px;height:15px;background:#b8cbee"></div>
<div style="left:486px;top:385px;width:650px;height:2px;background:#869ba2"></div>
<div style="left:1136px;top:385px;width:164px;height:2px;background:#94abb2"></div>
<div style="left:434px;top:400px;width:50px;height:15px;background:#4a4a4a"></div>
<div style="left:486px;top:400px;width:650px;height:15px;background:#a8c6d0"></div>
<div style="left:1136px;top:400px;width:164px;height:15px;background:#b8dde8"></div>
<div style="left:486px;top:400px;width:650px;height:2px;background:#869ba2"></div>
<div style="left:1136px;top:400px;width:164px;height:2px;background:#94abb2"></div>
<div style="left:434px;top:415px;width:34px;height:15px;background:#acacac"></div>
<div style="left:468px;top:415px;width:16px;height:15px;background:#b39bf2"></div>
<div style="left:486px;top:415px;width:650px;height:15px;background:#a9b9dc"></div>
<div style="left:1136px;top:415px;width:164px;height:15px;background:#b8cbee"></div>
<div style="left:486px;top:415px;width:650px;height:2px;background:#869ba2"></div>
<div style="left:1136px;top:415px;width:164px;height:2px;background:#94abb2"></div>
<div style="left:434px;top:430px;width:50px;height:15px;background:#4a4a4a"></div>
<div style="left:486px;top:430px;width:650px;height:15px;background:#a8c6d0"></div>
<div style="left:1136px;top:430px;width:164px;height:15px;background:#b8dde8"></div>
<div style="left:486px;top:430px;width:650px;height:2px;background:#869ba2"></div>
<div style="left:1136px;top:430px;width:164px;height:2px;background:#94abb2"></div>
<div style="left:434px;top:445px;width:34px;height:15px;background:#acacac"></div>
<div style="left:468px;top:445px;width:16px;height:15px;background:#b39bf2"></div>
<div style="left:486px;top:445px;width:650px;height:15px;background:#a9b9dc"></div>
<div style="left:1136px;top:445px;width:164px;height:15px;background:#b8cbee"></div>
<div style="left:486px;top:445px;width:650px;height:2px;background:#869ba2"></div>
<div style="left:1136px;top:445px;width:164px;height:2px;background:#94abb2"></div>
<div style="left:434px;top:460px;width:50px;height:15px;background:#4a4a4a"></div>
<div style="left:486px;top:460px;width:650px;height:15px;background:#a8c6d0"></div>
<div style="left:1136px;top:460px;width:164px;height:15px;background:#b8dde8"></div>
<div style="left:486px;top:460px;width:650px;height:2px;background:#869ba2"></div>
<div style="left:1136px;top:460px;width:164px;height:2px;background:#94abb2"></div>
<div style="left:434px;top:475px;width:34px;height:15px;background:#acacac"></div>
<div style="left:468px;top:475px;width:16px;height:15px;background:#b39bf2"></div>
<div style="left:486px;top:475px;width:650px;height:15px;background:#a9b9dc"></div>
<div style="left:1136px;top:475px;width:164px;height:15px;background:#b8cbee"></div>
<div style="left:486px;top:475px;width:650px;height:2px;background:#869ba2"></div>
<div style="left:1136px;top:475px;width:164px;height:2px;background:#94abb2"></div>
<div style="left:434px;top:490px;width:34px;height:15px;background:#acacac"></div>
<div style="left:468px;top:490px;width:16px;height:15px;background:#b39bf2"></div>
<div style="left:434px;top:490px;width:50px;height:2px;background:#3b3b39"></div>
<div style="left:486px;top:490px;width:650px;height:15px;background:#a9b9dc"></div>
<div style="left:1136px;top:490px;width:164px;height:15px;background:#b8cbee"></div>
<div style="left:486px;top:490px;width:650px;height:2px;background:#869ba2"></div>
<div style="left:1136px;top:490px;width:164px;height:2px;background:#94abb2"></div>
<div style="left:434px;top:505px;width:50px;height:15px;background:#4a4a4a"></div>
<div style="left:486px;top:505px;width:650px;height:15px;background:#a8c6d0"></div>
<div style="left:1136px;top:505px;width:164px;height:15px;background:#b8dde8"></div>
<div style="left:486px;top:505px;width:650px;height:2px;background:#869ba2"></div>
<div style="left:1136px;top:505px;width:164px;height:2px;background:#94abb2"></div>
<div style="left:434px;top:520px;width:34px;height:15px;background:#acacac"></div>
<div style="left:468px;top:520px;width:16px;height:15px;background:#b39bf2"></div>
<div style="left:486px;top:520px;width:650px;height:15px;background:#a9b9dc"></div>
<div style="left:1136px;top:520px;width:164px;height:15px;background:#b8cbee"></div>
<div style="left:486px;top:520px;width:650px;height:2px;background:#869ba2"></div>
<div style="left:1136px;top:520px;width:164px;height:2px;background:#94abb2"></div>
<div style="left:434px;top:535px;width:50px;height:15px;background:#4a4a4a"></div>
<div style="left:486px;top:535px;width:650px;height:15px;background:#a8c6d0"></div>
<div style="left:1136px;top:535px;width:164px;height:15px;background:#b8dde8"></div>
<div style="left:486px;top:535px;width:650px;height:2px;background:#869ba2"></div>
<div style="left:1136px;top:535px;width:164px;height:2px;background:#94abb2"></div>
<div style="left:434px;top:550px;width:50px;height:15px;background:#b39bf2"></div>
<div style="left:486px;top:550px;width:650px;height:15px;background:#a9b9dc"></div>
<div style="left:1136px;top:550px;width:164px;height:15px;background:#b8cbee"></div>
<div style="left:486px;top:550px;width:650px;height:2px;background:#869ba2"></div>
<div style="left:1136px;top:550px;width:164px;height:2px;background:#94abb2"></div>
<div style="left:434px;top:565px;width:34px;height:15px;background:#acacac"></div>
<div style="left:468px;top:565px;width:16px;height:15px;background:#b39bf2"></div>
<div style="left:434px;top:565px;width:50px;height:2px;background:#3b3b39"></div>
<div style="left:486px;top:565px;width:650px;height:15px;background:#a9b9dc"></div>
<div style="left:1136px;top:565px;width:164px;height:15px;background:#b8cbee"></div>
<div style="left:486px;top:565px;width:650px;height:2px;background:#869ba2"></div>
<div style="left:1136px;top:565px;width:164px;height:2px;background:#94abb2"></div>
<div style="left:434px;top:580px;width:50px;height:15px;background:#4a4a4a"></div>
<div style="left:486px;top:580px;width:650px;height:15px;background:#a8c6d0"></div>
<div style="left:1136px;top:580px;width:164px;height:15px;background:#b8dde8"></div>
<div style="left:486px;top:580px;width:650px;height:2px;background:#869ba2"></div>
<div style="left:1136px;top:580px;width:164px;height:2px;background:#94abb2"></div>
<div style="left:434px;top:595px;width:34px;height:15px;background:#acacac"></div>
<div style="left:468px;top:595px;width:16px;height:15px;background:#b39bf2"></div>
<div style="left:486px;top:595px;width:650px;height:15px;background:#a9b9dc"></div>
<div style="left:1136px;top:595px;width:164px;height:15px;background:#b8cbee"></div>
<div style="left:486px;top:595px;width:650px;height:2px;background:#869ba2"></div>
<div style="left:1136px;top:595px;width:164px;height:2px;background:#94abb2"></div>
<div style="left:434px;top:610px;width:50px;height:15px;background:#4a4a4a"></div>
<div style="left:486px;top:610px;width:650px;height:15px;background:#a8c6d0"></div>
<div style="left:1136px;top:610px;width:164px;height:15px;background:#b8dde8"></div>
<div style="left:486px;top:610px;width:650px;height:2px;background:#869ba2"></div>
<div style="left:1136px;top:610px;width:164px;height:2px;background:#94abb2"></div>
<div style="left:434px;top:625px;width:34px;height:15px;background:#acacac"></div>
<div style="left:468px;top:625px;width:16px;height:15px;background:#b39bf2"></div>
<div style="left:486px;top:625px;width:650px;height:15px;background:#a9b9dc"></div>
<div style="left:1136px;top:625px;width:164px;height:15px;background:#b8cbee"></div>
<div style="left:486px;top:625px;width:650px;height:2px;background:#869ba2"></div>
<div style="left:1136px;top:625px;width:164px;height:2px;background:#94abb2"></div>
<div style="left:434px;top:640px;width:50px;height:15px;background:#4a4a4a"></div>
<div style="left:486px;top:640px;width:650px;height:15px;background:#a8c6d0"></div>
<div style="left:1136px;top:640px;width:164px;height:15px;background:#b8dde8"></div>
<div style="left:486px;top:640px;width:650px;height:2px;background:#869ba2"></div>
<div style="left:1136px;top:640px;width:164px;height:2px;background:#94abb2"></div>
<div style="left:434px;top:655px;width:34px;height:15px;background:#acacac"></div>
<div style="left:468px;top:655px;width:16px;height:15px;background:#b39bf2"></div>
<div style="left:486px;top:655px;width:650px;height:15px;background:#a9b9dc"></div>
<div style="left:1136px;top:655px;width:164px;height:15px;background:#b8cbee"></div>
<div style="left:486px;top:655px;width:650px;height:2px;background:#869ba2"></div>
<div style="left:1136px;top:655px;width:164px;height:2px;background:#94abb2"></div>
<div style="left:434px;top:670px;width:34px;height:15px;background:#acacac"></div>
<div style="left:468px;top:670px;width:16px;height:15px;background:#b39bf2"></div>
<div style="left:434px;top:670px;width:50px;height:2px;background:#3b3b39"></div>
<div style="left:486px;top:670px;width:650px;height:15px;background:#a9b9dc"></div>
<div style="left:1136px;top:670px;width:164px;height:15px;background:#b8cbee"></div>
<div style="left:486px;top:670px;width:650px;height:2px;background:#869ba2"></div>
<div style="left:1136px;top:670px;width:164px;height:2px;background:#94abb2"></div>
<div style="left:434px;top:685px;width:50px;height:15px;background:#4a4a4a"></div>
<div style="left:486px;top:685px;width:650px;height:15px;background:#a8c6d0"></div>
<div style="left:1136px;top:685px;width:164px;height:15px;background:#b8dde8"></div>
<div style="left:486px;top:685px;width:650px;height:2px;background:#869ba2"></div>
<div style="left:1136px;top:685px;width:164px;height:2px;background:#94abb2"></div>
<div style="left:434px;top:700px;width:34px;height:15px;background:#acacac"></div>
<div style="left:468px;top:700px;width:16px;height:15px;background:#b39bf2"></div>
<div style="left:486px;top:700px;width:650px;height:15px;background:#a9b9dc"></div>
<div style="left:1136px;top:700px;width:164px;height:15px;background:#b8cbee"></div>
<div style="left:486px;top:700px;width:650px;height:2px;background:#869ba2"></div>
<div style="left:1136px;top:700px;width:164px;height:2px;background:#94abb2"></div>
<div style="left:434px;top:715px;width:50px;height:15px;background:#4a4a4a"></div>
<div style="left:486px;top:715px;width:650px;height:15px;background:#a8c6d0"></div>
<div style="left:1136px;top:715px;width:164px;height:15px;background:#b8dde8"></div>
<div style="left:486px;top:715px;width:650px;height:2px;background:#869ba2"></div>
<div style="left:1136px;top:715px;width:164px;height:2px;background:#94abb2"></div>
<div style="left:434px;top:730px;width:50px;height:14px;background:#b39bf2"></div>
<div style="left:486px;top:730px;width:650px;height:14px;background:#a9b9dc"></div>
<div style="left:1136px;top:730px;width:164px;height:14px;background:#b8cbee"></div>
<div style="left:486px;top:730px;width:650px;height:2px;background:#869ba2"></div>
<div style="left:1136px;top:730px;width:164px;height:2px;background:#94abb2"></div>
<div style="left:434px;top:744px;width:34px;height:15px;background:#acacac"></div>
<div style="left:468px;top:744px;width:16px;height:15px;background:#b39bf2"></div>
<div style="left:434px;top:744px;width:50px;height:2px;background:#3b3b39"></div>
<div style="left:486px;top:744px;width:650px;height:15px;background:#a9b9dc"></div>
<div style="left:1136px;top:744px;width:164px;height:15px;background:#b8cbee"></div>
<div style="left:486px;top:744px;width:650px;height:2px;background:#869ba2"></div>
<div style="left:1136px;top:744px;width:164px;height:2px;background:#94abb2"></div>
<div style="left:434px;top:759px;width:50px;height:15px;background:#4a4a4a"></div>
<div style="left:486px;top:759px;width:650px;height:15px;background:#a8c6d0"></div>
<div style="left:1136px;top:759px;width:164px;height:15px;background:#b8dde8"></div>
<div style="left:486px;top:759px;width:650px;height:2px;background:#869ba2"></div>
<div style="left:1136px;top:759px;width:164px;height:2px;background:#94abb2"></div>
<div style="left:434px;top:774px;width:34px;height:15px;background:#acacac"></div>
<div style="left:468px;top:774px;width:16px;height:15px;background:#b39bf2"></div>
<div style="left:486px;top:774px;width:650px;height:15px;background:#a9b9dc"></div>
<div style="left:1136px;top:774px;width:164px;height:15px;background:#b8cbee"></div>
<div style="left:486px;top:774px;width:650px;height:2px;background:#869ba2"></div>
<div style="left:1136px;top:774px;width:164px;height:2px;background:#94abb2"></div>
<div style="left:434px;top:789px;width:50px;height:15px;background:#4a4a4a"></div>
<div style="left:486px;top:789px;width:650px;height:15px;background:#a8c6d0"></div>
<div style="left:1136px;top:789px;width:164px;height:15px;background:#b8dde8"></div>
<div style="left:486px;top:789px;width:650px;height:2px;background:#869ba2"></div>
<div style="left:1136px;top:789px;width:164px;height:2px;background:#94abb2"></div>
<div style="left:434px;top:804px;width:34px;height:15px;background:#acacac"></div>
<div style="left:468px;top:804px;width:16px;height:15px;background:#b39bf2"></div>
<div style="left:486px;top:804px;width:650px;height:15px;background:#a9b9dc"></div>
<div style="left:1136px;top:804px;width:164px;height:15px;background:#b8cbee"></div>
<div style="left:486px;top:804px;width:650px;height:2px;background:#869ba2"></div>
<div style="left:1136px;top:804px;width:164px;height:2px;background:#94abb2"></div>
<div style="left:434px;top:819px;width:50px;height:15px;background:#4a4a4a"></div>
<div style="left:486px;top:819px;width:650px;height:15px;background:#a8c6d0"></div>
<div style="left:1136px;top:819px;width:164px;height:15px;background:#b8dde8"></div>
<div style="left:486px;top:819px;width:650px;height:2px;background:#869ba2"></div>
<div style="left:1136px;top:819px;width:164px;height:2px;background:#94abb2"></div>
<div style="left:434px;top:834px;width:34px;height:15px;background:#acacac"></div>
<div style="left:468px;top:834px;width:16px;height:15px;background:#b39bf2"></div>
<div style="left:486px;top:834px;width:650px;height:15px;background:#a9b9dc"></div>
<div style="left:1136px;top:834px;width:164px;height:15px;background:#b8cbee"></div>
<div style="left:486px;top:834px;width:650px;height:2px;background:#869ba2"></div>
<div style="left:1136px;top:834px;width:164px;height:2px;background:#94abb2"></div>
<div style="left:434px;top:849px;width:34px;height:15px;background:#acacac"></div>
<div style="left:468px;top:849px;width:16px;height:15px;background:#b39bf2"></div>
<div style="left:434px;top:849px;width:50px;height:2px;background:#3b3b39"></div>
<div style="left:486px;top:849px;width:650px;height:15px;background:#a9b9dc"></div>
<div style="left:1136px;top:849px;width:164px;height:15px;background:#b8cbee"></div>
<div style="left:486px;top:849px;width:650px;height:2px;background:#869ba2"></div>
<div style="left:1136px;top:849px;width:164px;height:2px;background:#94abb2"></div>
<div style="left:434px;top:864px;width:50px;height:15px;background:#4a4a4a"></div>
<div style="left:486px;top:864px;width:650px;height:15px;background:#a8c6d0"></div>
<div style="left:1136px;top:864px;width:164px;height:15px;background:#b8dde8"></div>
<div style="left:486px;top:864px;width:650px;height:2px;background:#869ba2"></div>
<div style="left:1136px;top:864px;width:164px;height:2px;background:#94abb2"></div>
<div style="left:434px;top:879px;width:34px;height:15px;background:#acacac"></div>
<div style="left:468px;top:879px;width:16px;height:15px;background:#b39bf2"></div>
<div style="left:486px;top:879px;width:650px;height:15px;background:#a9b9dc"></div>
<div style="left:1136px;top:879px;width:164px;height:15px;background:#b8cbee"></div>
<div style="left:486px;top:879px;width:650px;height:2px;background:#869ba2"></div>
<div style="left:1136px;top:879px;width:164px;height:2px;background:#94abb2"></div>
<div style="left:434px;top:894px;width:50px;height:15px;background:#4a4a4a"></div>
<div style="left:486px;top:894px;width:650px;height:15px;background:#a8c6d0"></div>
<div style="left:1136px;top:894px;width:164px;height:15px;background:#b8dde8"></div>
<div style="left:486px;top:894px;width:650px;height:2px;background:#869ba2"></div>
<div style="left:1136px;top:894px;width:164px;height:2px;background:#94abb2"></div>
<div style="left:434px;top:909px;width:50px;height:15px;background:#b39bf2"></div>
<div style="left:486px;top:909px;width:650px;height:15px;background:#a9b9dc"></div>
<div style="left:1136px;top:909px;width:164px;height:15px;background:#b8cbee"></div>
<div style="left:486px;top:909px;width:650px;height:2px;background:#869ba2"></div>
<div style="left:1136px;top:909px;width:164px;height:2px;background:#94abb2"></div>
<div style="left:434px;top:924px;width:34px;height:15px;background:#acacac"></div>
<div style="left:468px;top:924px;width:16px;height:15px;background:#b39bf2"></div>
<div style="left:434px;top:924px;width:50px;height:2px;background:#3b3b39"></div>
<div style="left:486px;top:924px;width:650px;height:15px;background:#a9b9dc"></div>
<div style="left:1136px;top:924px;width:164px;height:15px;background:#b8cbee"></div>
<div style="left:486px;top:924px;width:650px;height:2px;background:#869ba2"></div>
<div style="left:1136px;top:924px;width:164px;height:2px;background:#94abb2"></div>
<div style="left:434px;top:939px;width:50px;height:15px;background:#4a4a4a"></div>
<div style="left:486px;top:939px;width:650px;height:15px;background:#a8c6d0"></div>
<div style="left:1136px;top:939px;width:164px;height:15px;background:#b8dde8"></div>
<div style="left:486px;top:939px;width:650px;height:2px;background:#869ba2"></div>
<div style="left:1136px;top:939px;width:164px;height:2px;background:#94abb2"></div>
<div style="left:434px;top:954px;width:34px;height:15px;background:#acacac"></div>
<div style="left:468px;top:954px;width:16px;height:15px;background:#b39bf2"></div>
<div style="left:486px;top:954px;width:650px;height:15px;background:#a9b9dc"></div>
<div style="left:1136px;top:954px;width:164px;height:15px;background:#b8cbee"></div>
<div style="left:486px;top:954px;width:650px;height:2px;background:#869ba2"></div>
<div style="left:1136px;top:954px;width:164px;height:2px;background:#94abb2"></div>
<div style="left:434px;top:969px;width:50px;height:15px;background:#4a4a4a"></div>
<div style="left:486px;top:969px;width:650px;height:15px;background:#a8c6d0"></div>
<div style="left:1136px;top:969px;width:164px;height:15px;background:#b8dde8"></div>
<div style="left:486px;top:969px;width:650px;height:2px;background:#869ba2"></div>
<div style="left:1136px;top:969px;width:164px;height:2px;background:#94abb2"></div>
<div style="left:434px;top:984px;width:34px;height:15px;background:#acacac"></div>
<div style="left:468px;top:984px;width:16px;height:15px;background:#b39bf2"></div>
<div style="left:486px;top:984px;width:650px;height:15px;background:#a9b9dc"></div>
<div style="left:1136px;top:984px;width:164px;height:15px;background:#b8cbee"></div>
<div style="left:486px;top:984px;width:650px;height:2px;background:#869ba2"></div>
<div style="left:1136px;top:984px;width:164px;height:2px;background:#94abb2"></div>
<div style="left:434px;top:999px;width:50px;height:15px;background:#4a4a4a"></div>
<div style="left:486px;top:999px;width:650px;height:15px;background:#a8c6d0"></div>
<div style="left:1136px;top:999px;width:164px;height:15px;background:#b8dde8"></div>
<div style="left:486px;top:999px;width:650px;height:2px;background:#869ba2"></div>
<div style="left:1136px;top:999px;width:164px;height:2px;background:#94abb2"></div>
<div style="left:434px;top:1014px;width:34px;height:2px;background:#acacac"></div>
<div style="left:468px;top:1014px;width:16px;height:2px;background:#b39bf2"></div>
<div style="left:486px;top:1014px;width:650px;height:2px;background:#a9b9dc"></div>
<div style="left:1136px;top:1014px;width:164px;height:2px;background:#b8cbee"></div>
<div style="left:486px;top:1014px;width:650px;height:2px;background:#869ba2"></div>
<div style="left:1136px;top:1014px;width:164px;height:2px;background:#94abb2"></div>
<div style="left:372px;top:206px;width:60px;height:2px;background:#1c1c1c"></div>
<div style="left:372px;top:385px;width:60px;height:2px;background:#1c1c1c"></div>
<div style="left:372px;top:580px;width:60px;height:2px;background:#1c1c1c"></div>
<div style="left:372px;top:744px;width:60px;height:2px;background:#1c1c1c"></div>
<div style="left:372px;top:924px;width:60px;height:2px;background:#1c1c1c"></div>
<div style="left:378.0px;top:179.9px;font-family:'Liberation Sans', sans-serif;font-size:20px;line-height:22.34px;color:#dcdcdc;letter-spacing:0.3px;white-space:nowrap;-webkit-text-stroke:0.5px #dcdcdc;">C6</div>
<div style="left:378.0px;top:359.9px;font-family:'Liberation Sans', sans-serif;font-size:20px;line-height:22.34px;color:#dcdcdc;letter-spacing:0.3px;white-space:nowrap;-webkit-text-stroke:0.5px #dcdcdc;">C5</div>
<div style="left:378.0px;top:553.9px;font-family:'Liberation Sans', sans-serif;font-size:20px;line-height:22.34px;color:#dcdcdc;letter-spacing:0.3px;white-space:nowrap;-webkit-text-stroke:0.5px #dcdcdc;">B3</div>
<div style="left:378.0px;top:718.4px;font-family:'Liberation Sans', sans-serif;font-size:20px;line-height:22.34px;color:#dcdcdc;letter-spacing:0.3px;white-space:nowrap;-webkit-text-stroke:0.5px #dcdcdc;">C3</div>
<div style="left:378.0px;top:898.4px;font-family:'Liberation Sans', sans-serif;font-size:20px;line-height:22.34px;color:#dcdcdc;letter-spacing:0.3px;white-space:nowrap;-webkit-text-stroke:0.5px #dcdcdc;">C2</div>
<div style="left:484px;top:84px;width:2px;height:1018px;background:#b5b5b5"></div>
<div style="left:484px;top:520px;width:816px;height:15px;background:#9a6fa9;border:2px solid #050505;border-right:none;box-sizing:border-box"></div>
<div style="left:484px;top:565px;width:816px;height:15px;background:#9a6fa9;border:2px solid #050505;border-right:none;box-sizing:border-box"></div>
<div style="left:484px;top:625px;width:816px;height:15px;background:#9a6fa9;border:2px solid #050505;border-right:none;box-sizing:border-box"></div>
<div style="left:484px;top:670px;width:816px;height:15px;background:#9a6fa9;border:2px solid #050505;border-right:none;box-sizing:border-box"></div>
<div style="left:484px;top:730px;width:816px;height:14px;background:#9a6fa9;border:2px solid #050505;border-right:none;box-sizing:border-box"></div>
<div style="left:372px;top:1016px;width:928px;height:4px;background:#1c1c1c"></div>
<div style="left:372px;top:1020px;width:112px;height:82px;background:#404040"></div>
<div style="left:486px;top:1020px;width:650px;height:82px;background:#a8c6d0"></div>
<div style="left:1136px;top:1020px;width:164px;height:82px;background:#b8dde8"></div>
<svg style="position:absolute;left:376px;top:1024px;overflow:visible" width="20" height="22" viewBox="0 0 20 22"><rect x="2" y="14" width="2.2" height="6" fill="#e0e0e0"/><rect x="6" y="10" width="2.2" height="10" fill="#e0e0e0"/><rect x="10" y="6" width="2.2" height="14" fill="#e0e0e0"/><rect x="14" y="2" width="2.2" height="18" fill="#e0e0e0"/></svg>
<div style="right:819px;top:1019.5px;font-family:'Liberation Sans', sans-serif;font-size:20px;line-height:22.34px;color:#dcdcdc;letter-spacing:0.3px;white-space:nowrap;-webkit-text-stroke:0.5px #dcdcdc;">127</div>
<div style="right:819px;top:1049.9px;font-family:'Liberation Sans', sans-serif;font-size:20px;line-height:22.34px;color:#dcdcdc;letter-spacing:0.3px;white-space:nowrap;-webkit-text-stroke:0.5px #dcdcdc;">64</div>
<div style="right:819px;top:1079.9px;font-family:'Liberation Sans', sans-serif;font-size:20px;line-height:22.34px;color:#dcdcdc;letter-spacing:0.3px;white-space:nowrap;-webkit-text-stroke:0.5px #dcdcdc;">1</div>
<div style="left:472px;top:1025.65px;width:12px;height:1.5px;background:#d0d0d0"></div>
<div style="left:478px;top:1044.05px;width:6px;height:1.5px;background:#d0d0d0"></div>
<div style="left:472px;top:1060.25px;width:12px;height:1.5px;background:#d0d0d0"></div>
<div style="left:478px;top:1078.05px;width:6px;height:1.5px;background:#d0d0d0"></div>
<div style="left:472px;top:1094.25px;width:12px;height:1.5px;background:#d0d0d0"></div>
<div style="left:486px;top:1042.2px;width:814px;height:1.6px;background:#5b8ef0"></div>
<svg style="position:absolute;left:483px;top:1035px;overflow:visible" width="16" height="16" viewBox="0 0 16 16"><circle cx="8" cy="8" r="6" fill="#5b8ef0" stroke="#111" stroke-width="1.8"/></svg>
<div style="left:372px;top:1102px;width:928px;height:2px;background:#1c1c1c"></div>
<div style="left:372px;top:1104px;width:928px;height:34px;background:#333"></div>
<div style="left:376px;top:1108px;width:26px;height:26px;background:#f3b366;border:2px solid #0a0a0a;box-sizing:border-box"></div>
<svg style="position:absolute;left:376px;top:1108px;overflow:visible" width="26" height="26" viewBox="0 0 26 26"><circle cx="9" cy="13" r="3" fill="#111"/><path d="M9 13 L20 13" stroke="#111" stroke-width="2"/></svg>
<svg style="position:absolute;left:410px;top:1116px;overflow:visible" width="14" height="9" viewBox="0 0 14 9"><path d="M0 0 L14 0 L7 9 Z" fill="#d6d6d6"/></svg>
<div style="left:432px;top:1104px;width:2px;height:34px;background:#262626"></div>
<div style="left:440.5px;top:1109.9px;font-family:'Liberation Sans', sans-serif;font-size:20px;line-height:22.34px;color:#dcdcdc;letter-spacing:1.0px;white-space:nowrap;-webkit-text-stroke:0.5px #dcdcdc;">Velocity</div>
<div style="left:526px;top:1108.4px;width:127.4px;height:25.6px;background:#151515;border:1.5px solid #0c0c0c;border-radius:12.799999999999955px;box-sizing:border-box"></div>
<div style="left:526px;width:127.39999999999998px;text-align:center;top:1109.98px;font-family:'Liberation Sans', sans-serif;font-size:20px;line-height:22.34px;color:#dcdcdc;letter-spacing:1.0px;white-space:nowrap;-webkit-text-stroke:0.5px #dcdcdc;">Randomize</div>
<div style="left:662px;top:1108.4px;width:76px;height:25.6px;background:#1e1e1e;border:2px solid #0a0a0a;box-sizing:border-box"></div>
<div style="left:664px;top:1110.4px;width:56px;height:21.6px;background:#2f6f83"></div>
<div style="left:662px;width:76px;text-align:center;top:1109.9px;font-family:'Liberation Sans', sans-serif;font-size:20px;line-height:22.34px;color:#dcdcdc;letter-spacing:1.0px;white-space:nowrap;-webkit-text-stroke:0.5px #dcdcdc;padding-left:4px;box-sizing:border-box">100</div>
<div style="left:748px;top:1108px;width:2px;height:26px;background:#1e1e1e"></div>
<div style="left:760.5px;top:1109.9px;font-family:'Liberation Sans', sans-serif;font-size:20px;line-height:22.34px;color:#dcdcdc;letter-spacing:1.0px;white-space:nowrap;-webkit-text-stroke:0.5px #dcdcdc;">Ramp</div>
<div style="left:822px;top:1108px;width:76px;height:26px;background:#333;border:2px solid #0a0a0a;box-sizing:border-box"></div>
<div style="left:822px;width:76px;text-align:center;top:1109.9px;font-family:'Liberation Sans', sans-serif;font-size:20px;line-height:22.34px;color:#dcdcdc;letter-spacing:1.0px;white-space:nowrap;-webkit-text-stroke:0.5px #dcdcdc;">100</div>
<div style="left:906px;top:1108px;width:76px;height:26px;background:#333;border:2px solid #0a0a0a;box-sizing:border-box"></div>
<div style="left:906px;width:76px;text-align:center;top:1109.9px;font-family:'Liberation Sans', sans-serif;font-size:20px;line-height:22.34px;color:#dcdcdc;letter-spacing:1.0px;white-space:nowrap;-webkit-text-stroke:0.5px #dcdcdc;">127</div>
<div style="left:992px;top:1108px;width:2px;height:26px;background:#1e1e1e"></div>
<div style="left:1004.5px;top:1109.9px;font-family:'Liberation Sans', sans-serif;font-size:20px;line-height:22.34px;color:#dcdcdc;letter-spacing:1.0px;white-space:nowrap;-webkit-text-stroke:0.5px #dcdcdc;">Deviation</div>
<div style="left:1104px;top:1108px;width:116px;height:26px;background:#1c1c1c;border:2px solid #0a0a0a;box-sizing:border-box"></div>
<div style="left:1104px;width:116px;text-align:center;top:1109.9px;font-family:'Liberation Sans', sans-serif;font-size:20px;line-height:22.34px;color:#dcdcdc;letter-spacing:1.0px;white-space:nowrap;-webkit-text-stroke:0.5px #dcdcdc;">0</div>
<div style="left:32px;top:1160px;width:30px;height:30px;background:#484848;border-radius:50%"></div>
<svg style="position:absolute;left:32px;top:1160px;overflow:visible" width="30" height="30" viewBox="0 0 30 30"><circle cx="15" cy="8.5" r="2.2" fill="#262626"/><rect x="12.8" y="12" width="4.4" height="12" fill="#262626"/></svg>
<div style="left:94px;top:1156px;width:1206px;height:38px;background:#333;border-radius:4px"></div>
<div style="left:106.5px;top:1163.9px;font-family:'Liberation Sans', sans-serif;font-size:20px;line-height:22.34px;color:#dcdcdc;letter-spacing:1.0px;white-space:nowrap;-webkit-text-stroke:0.5px #dcdcdc;">Time Selection</div>
<div style="left:272.5px;top:1163.9px;font-family:'Liberation Sans', sans-serif;font-size:20px;line-height:22.34px;color:#dcdcdc;letter-spacing:1.0px;white-space:nowrap;-webkit-text-stroke:0.5px #dcdcdc;">Start: 1.1.1</div>
<div style="left:405.5px;top:1163.9px;font-family:'Liberation Sans', sans-serif;font-size:20px;line-height:22.34px;color:#dcdcdc;letter-spacing:1.0px;white-space:nowrap;-webkit-text-stroke:0.5px #dcdcdc;">End: 2.1.1</div>
<div style="left:524.5px;top:1163.9px;font-family:'Liberation Sans', sans-serif;font-size:20px;line-height:22.34px;color:#dcdcdc;letter-spacing:1.0px;white-space:nowrap;-webkit-text-stroke:0.5px #dcdcdc;">Length: 1.0.0</div>
<div style="left:16px;top:384px;width:353px;height:103px;border:10px solid #e8402a;box-sizing:border-box"></div>
<div style="left:190px;top:535px;width:167px;height:67px;border:10px solid #e8402a;box-sizing:border-box"></div>
</body></html>
